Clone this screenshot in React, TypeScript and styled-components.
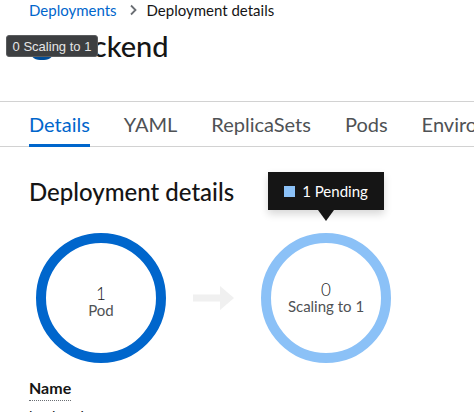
import React from 'react';
import styled, { createGlobalStyle } from 'styled-components';

const colors = {
    blue: '#0066cc',
    lightBlue: '#8bc1f7',
    text: '#151515',
    subtle: '#4f5255',
    border: '#d2d2d2',
};

const GlobalStyle = createGlobalStyle`
    body {
        margin: 0;
        background: #ffffff;
        font-family: Lato, "Noto Sans", sans-serif;
        color: ${colors.text};
        overflow: hidden;
    }
`;

const tabs = ['Details', 'YAML', 'ReplicaSets', 'Pods', 'Environment'];

const Donut: React.FC<{
    color: string;
    count: string;
    label: string;
    shift?: number;
}> = ({ color, count, label, shift = 0 }) => (
    <Ring $color={color} $shift={shift}>
        <Count>{count}</Count>
        <RingLabel>{label}</RingLabel>
    </Ring>
);

export default function App() {
    return (
        <>
            <GlobalStyle />
            <Page>
                <Header>
                    <Breadcrumb>
                        <Crumb href="#">Deployments</Crumb>
                        <Chevron viewBox="0 0 8 12">
                            <path
                                d="M2 1.5 6.5 6 2 10.5"
                                fill="none"
                                stroke="#6a6e73"
                                strokeWidth="1.8"
                            />
                        </Chevron>
                        <Current>Deployment details</Current>
                    </Breadcrumb>
                    <TitleRow>
                        <Badge>D</Badge>
                        <Title>backend</Title>
                        <NativeTip>0 Scaling to 1</NativeTip>
                    </TitleRow>
                </Header>

                <TabBar>
                    {tabs.map((t, i) => (
                        <Tab key={t} $active={i === 0}>
                            {t}
                        </Tab>
                    ))}
                </TabBar>

                <Section>
                    <Heading>Deployment details</Heading>
                    <RingRow>
                        <Donut color={colors.blue} count="1" label="Pod" shift={8} />
                        <Arrow viewBox="0 0 41 24">
                            <path d="M0 8.5h27V0l14 12-14 12v-8.5H0z" fill="#f0f0f0" />
                        </Arrow>
                        <RingSlot>
                            <Donut
                                color={colors.lightBlue}
                                count="0"
                                label="Scaling to 1"
                            />
                            <Tooltip>
                                <Swatch />
                                1 Pending
                            </Tooltip>
                        </RingSlot>
                    </RingRow>
                    <Term>Name</Term>
                    <Value>backend</Value>
                </Section>
            </Page>
        </>
    );
}

const Page = styled.div`
    width: 474px;
    height: 412px;
    overflow: hidden;
`;

const Header = styled.div`
    padding-left: 29px;
`;

const Breadcrumb = styled.nav`
    display: flex;
    align-items: center;
    height: 20px;
    font-size: 15px;
`;

const Crumb = styled.a`
    color: ${colors.blue};
    text-decoration: none;
`;

const Chevron = styled.svg`
    width: 8px;
    height: 12px;
    margin: 0 10px 0 12px;
`;

const Current = styled.span`
    color: ${colors.text};
`;

const TitleRow = styled.div`
    position: relative;
    display: flex;
    align-items: center;
    gap: 7px;
    margin-top: 10px;
    height: 32px;
`;

const Badge = styled.span`
    display: inline-flex;
    align-items: center;
    justify-content: center;
    width: 26px;
    height: 22px;
    margin-top: 6px;
    border-radius: 11px;
    background: #004d99;
    color: #fff;
    font-size: 13px;
`;

const Title = styled.h1`
    margin: 0;
    font-size: 29px;
    font-weight: 500;
    line-height: 32px;
`;

const NativeTip = styled.div`
    position: absolute;
    left: -23px;
    top: 5px;
    width: 92px;
    height: 22px;
    box-sizing: border-box;
    display: flex;
    align-items: center;
    justify-content: center;
    background: #3d3f41;
    border: 1px solid #5a5c5e;
    border-radius: 3px;
    color: #e6e6e6;
    font-family: "Liberation Sans", Arial, sans-serif;
    font-size: 13px;
`;

const TabBar = styled.div`
    display: flex;
    gap: 34px;
    margin-top: 39px;
    padding-left: 29px;
    border-top: 1px solid ${colors.border};
    border-bottom: 1px solid ${colors.border};
    white-space: nowrap;
`;

const Tab = styled.div<{ $active: boolean }>`
    height: 45px;
    box-sizing: border-box;
    display: flex;
    align-items: center;
    margin-bottom: -1px;
    font-size: 20px;
    color: ${(p) => (p.$active ? colors.blue : colors.subtle)};
    border-bottom: 3px solid ${(p) => (p.$active ? colors.blue : 'transparent')};
    padding-top: 2px;
`;

const Section = styled.div`
    padding: 31px 0 0 29px;
`;

const Heading = styled.h2`
    margin: 0;
    font-size: 24px;
    font-weight: 500;
    line-height: 28px;
`;

const RingRow = styled.div`
    display: flex;
    align-items: center;
    gap: 27px;
    margin: 27px 0 0 7px;
`;

const RingSlot = styled.div`
    position: relative;
`;

const Ring = styled.div<{ $color: string; $shift: number }>`
    width: 130px;
    height: 130px;
    box-sizing: border-box;
    border: 10px solid ${(p) => p.$color};
    border-radius: 50%;
    padding-top: ${(p) => p.$shift}px;
    display: flex;
    flex-direction: column;
    align-items: center;
    justify-content: center;
`;

const Count = styled.span`
    font-size: 17px;
    line-height: 17px;
    font-weight: 300;
    color: ${colors.text};
`;

const RingLabel = styled.span`
    font-size: 15px;
    line-height: 17px;
    color: ${colors.subtle};
`;

const Arrow = styled.svg`
    width: 41px;
    height: 24px;
`;

const Tooltip = styled.div`
    position: absolute;
    left: 50%;
    bottom: calc(100% + 23px);
    transform: translateX(-50%);
    width: 116px;
    height: 38px;
    box-sizing: border-box;
    display: flex;
    align-items: center;
    justify-content: center;
    gap: 7px;
    background: #151515;
    color: #fff;
    font-size: 15px;
    box-shadow: 0 4px 8px rgba(3, 3, 3, 0.16);

    &::after {
        content: '';
        position: absolute;
        left: 50%;
        top: 100%;
        transform: translateX(-50%);
        border: 8px solid transparent;
        border-top: 11px solid #151515;
        border-bottom: 0;
    }
`;

const Swatch = styled.span`
    width: 11px;
    height: 11px;
    background: ${colors.lightBlue};
`;

const Term = styled.div`
    display: inline-block;
    margin-top: 15px;
    font-size: 16px;
    font-weight: 700;
    line-height: 20px;
    border-bottom: 1px dotted #6a6e73;
    padding-bottom: 2px;
`;

const Value = styled.div`
    margin-top: 6px;
    font-size: 15px;
`;
